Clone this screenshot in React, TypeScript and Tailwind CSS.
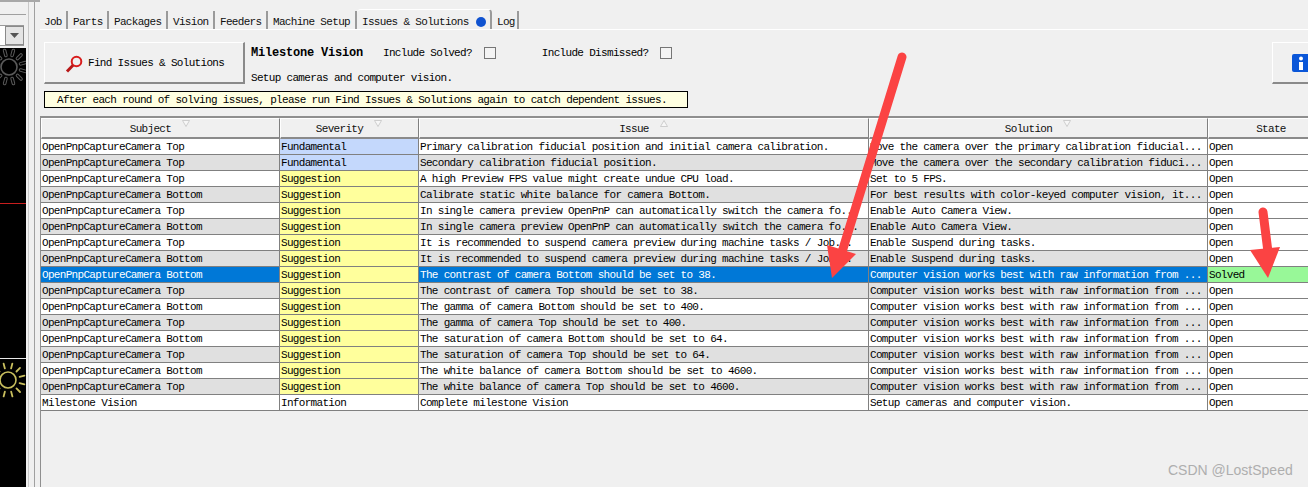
import React from "react";

const mono = "[font-family:'Liberation_Mono',monospace]";
const computer = "Computer vision works best with raw information from ...";
type R = [string, string, string, string];
const rows: R[] = [
  ["OpenPnpCaptureCamera Top", "Fundamental", "Primary calibration fiducial position and initial camera calibration.", "Move the camera over the primary calibration fiducial..."],
  ["OpenPnpCaptureCamera Top", "Fundamental", "Secondary calibration fiducial position.", "Move the camera over the secondary calibration fiduci..."],
  ["OpenPnpCaptureCamera Top", "Suggestion", "A high Preview FPS value might create undue CPU load.", "Set to 5 FPS."],
  ["OpenPnpCaptureCamera Bottom", "Suggestion", "Calibrate static white balance for camera Bottom.", "For best results with color-keyed computer vision, it..."],
  ["OpenPnpCaptureCamera Top", "Suggestion", "In single camera preview OpenPnP can automatically switch the camera fo...", "Enable Auto Camera View."],
  ["OpenPnpCaptureCamera Bottom", "Suggestion", "In single camera preview OpenPnP can automatically switch the camera fo...", "Enable Auto Camera View."],
  ["OpenPnpCaptureCamera Top", "Suggestion", "It is recommended to suspend camera preview during machine tasks / Job...", "Enable Suspend during tasks."],
  ["OpenPnpCaptureCamera Bottom", "Suggestion", "It is recommended to suspend camera preview during machine tasks / Job...", "Enable Suspend during tasks."],
  ["OpenPnpCaptureCamera Bottom", "Suggestion", "The contrast of camera Bottom should be set to 38.", computer],
  ["OpenPnpCaptureCamera Top", "Suggestion", "The contrast of camera Top should be set to 38.", computer],
  ["OpenPnpCaptureCamera Bottom", "Suggestion", "The gamma of camera Bottom should be set to 400.", computer],
  ["OpenPnpCaptureCamera Top", "Suggestion", "The gamma of camera Top should be set to 400.", computer],
  ["OpenPnpCaptureCamera Bottom", "Suggestion", "The saturation of camera Bottom should be set to 64.", computer],
  ["OpenPnpCaptureCamera Top", "Suggestion", "The saturation of camera Top should be set to 64.", computer],
  ["OpenPnpCaptureCamera Bottom", "Suggestion", "The white balance of camera Bottom should be set to 4600.", computer],
  ["OpenPnpCaptureCamera Top", "Suggestion", "The white balance of camera Top should be set to 4600.", computer],
  ["Milestone Vision", "Information", "Complete milestone Vision", "Setup cameras and computer vision."],
];

const tabs: [string, string, string][] = [
  ["Job", "w-[28px]", "pl-[4px]"],
  ["Parts", "w-[41px]", "pl-[5px]"],
  ["Packages", "w-[59px]", "pl-[5px]"],
  ["Vision", "w-[47px]", "pl-[5px]"],
  ["Feeders", "w-[53px]", "pl-[5px]"],
  ["Machine Setup", "w-[89px]", "pl-[5px]"],
];

const gridCols = "grid grid-cols-[239px_139px_450px_339px_126px]";

function Sun({ color, cx, cy, petals }: { color: string; cx: number; cy: number; petals?: boolean }) {
  const rays = Array.from({ length: 12 }, (_, i) => (i * Math.PI) / 6 + 0.26);
  return (
    <svg width="26" height="44" viewBox="0 0 26 44" className="block">
      <circle cx={cx} cy={cy} r="8" fill="none" stroke={color} strokeWidth="1.6" />
      {rays.map((a, i) => {
        const p = [cx + Math.cos(a) * 12, cy + Math.sin(a) * 12, cx + Math.cos(a) * 17, cy + Math.sin(a) * 17];
        return (
          <g key={i}>
            <line x1={p[0]} y1={p[1]} x2={p[2]} y2={p[3]} stroke={color} strokeWidth={petals ? 3.6 : 1.8} strokeLinecap="round" />
            {petals && <line x1={p[0]} y1={p[1]} x2={p[2]} y2={p[3]} stroke="#000" strokeWidth="1.6" strokeLinecap="round" />}
          </g>
        );
      })}
    </svg>
  );
}

function Head({ label, sort, up }: { label: string; sort?: boolean; up?: boolean }) {
  return (
    <div className={`h-[21px] border-t border-l border-t-white border-l-white border-r border-b-2 border-r-[#7f7f7f] border-b-[#8a8a8a] bg-[#f0f0f0] text-center leading-[20px] text-[#111] ${sort ? "pr-[20px]" : ""}`}>
      <span className="relative inline-block">
        {label}
        {sort && (
          <svg width="8" height="7" viewBox="0 0 8 7" className="absolute left-full top-[1px] ml-[11px]">
            <path d={up ? "M4 .5 L7.5 6.5 H.5 Z" : "M.5 .5 H7.5 L4 6.5 Z"} fill="#f7f7f7" stroke="#c4c4c4" strokeWidth="0.8" />
          </svg>
        )}
      </span>
    </div>
  );
}

function Check() {
  return <span className="inline-block h-[12px] w-[12px] border border-[#767676] bg-[#f4f4f4] align-middle" />;
}

export default function App() {
  return (
    <div className={`relative flex h-[487px] w-[1308px] overflow-hidden bg-[#f0f0f0] text-[11px] tracking-[-0.68px] text-black ${mono}`}>
      {/* left stub panel */}
      <div className="flex w-[40px] shrink-0 flex-col border-t-2 border-t-[#a8a8a8]">
        <div className="flex flex-1">
          <div className="flex w-[26px] flex-col pt-[12px]">
            <div className="h-[1px] bg-[#a0a0a0]" />
            <div className="mr-[2px] mt-[10px] flex h-[21px] border-y border-[#9a9a9a] bg-white">
              <div className="flex-1" />
              <div className="flex w-[19px] items-center justify-center border border-[#8a8a8a] bg-[#e4e4e4]">
                <svg width="9" height="5" viewBox="0 0 9 5"><path d="M0 0H9L4.5 5Z" fill="#555" /></svg>
              </div>
            </div>
            <div className="mt-[2px] flex flex-1 flex-col bg-black">
              <div className="overflow-hidden">
                <Sun color="#5a5a5a" cx={9} cy={19} petals />
              </div>
              <div className="mt-[111px] h-[1px] bg-[#c81e1e]" />
              <div className="h-[154px]" />
              <div className="h-[1px] bg-[#e8e8e8]" />
              <Sun color="#c9bf5e" cx={8} cy={21} />
            </div>
          </div>
          <div className="ml-[2px] w-[1px] bg-[#c8c8c8]" />
          <div className="ml-[5px] w-[1px] bg-[#a0a0a0]" />
        </div>
      </div>

      {/* main */}
      <div className="flex min-w-0 flex-1 flex-col pt-[9px]">
        <div className="flex h-[21px] items-end border-b border-b-white">
          {tabs.map(([t, w, p]) => (
            <div key={t} className={`h-[18px] ${w} ${p} shrink-0 border-r-2 border-r-[#9a9a9a] leading-[23px] text-[#111]`}>
              {t}
            </div>
          ))}
          <div className="flex h-[20px] w-[135px] shrink-0 items-center rounded-t-sm border-r-2 border-r-[#9a9a9a] border-t border-t-white pl-[5px] pt-[5px] text-[#111]">
            <span>Issues &amp; Solutions</span>
            <span className="ml-[7px] h-[10px] w-[10px] rounded-full bg-[#0f52d0]" />
          </div>
          <div className="h-[18px] w-[27px] shrink-0 border-r-2 border-r-[#9a9a9a] pl-[5px] leading-[23px] text-[#111]">Log</div>
        </div>

        <div className="mt-[12px] flex h-[42px] pl-[4px]">
          <button className="flex h-[42px] w-[201px] shrink-0 items-center border-t border-l border-t-white border-l-white border-r-2 border-b-2 border-r-[#8a8a8a] border-b-[#8a8a8a] bg-[#f0f0f0] pl-[20px] pt-[2px]">
            <svg width="18" height="18" viewBox="0 0 18 18">
              <circle cx="11.5" cy="6.5" r="4.8" fill="none" stroke="#d81c1c" strokeWidth="2" />
              <line x1="8" y1="10.3" x2="2" y2="16.5" stroke="#b81818" strokeWidth="3" />
            </svg>
            <span className="ml-[5px]">Find Issues &amp; Solutions</span>
          </button>
          <div className="ml-[6px] flex w-[440px] shrink-0 flex-col">
            <div className="mt-[4px] flex h-[14px] items-center">
              <span className="w-[132px] text-[12px] font-bold tracking-[-0.2px]">Milestone Vision</span>
              <span>Include Solved?</span>
              <span className="ml-[12px]"><Check /></span>
              <span className="ml-[46px]">Include Dismissed?</span>
              <span className="ml-[12px]"><Check /></span>
            </div>
            <div className="mt-[11px] leading-[14px]">Setup cameras and computer vision.</div>
          </div>
          <div className="ml-auto mr-[-24px] flex h-[42px] w-[60px] items-center border-t border-l border-t-white border-l-white border-b-2 border-b-[#8a8a8a] pl-[19px]">
            <svg width="18" height="18" viewBox="0 0 18 18">
              <rect width="18" height="18" rx="2" fill="#0a56d8" />
              <circle cx="9" cy="4.5" r="2" fill="#fff" />
              <rect x="7" y="8" width="4" height="8" fill="#fff" />
            </svg>
          </div>
        </div>

        <div className="ml-[4px] mt-[7px] h-[17px] w-[644px] border border-black bg-[#ffffe1] pl-[12px] leading-[16px]">
          After each round of solving issues, please run Find Issues &amp; Solutions again to catch dependent issues.
        </div>

        <div className="mt-[8px] flex-1 overflow-hidden border-t-2 border-l border-t-[#8f8f8f] border-l-[#8f8f8f]">
          <div className={`${gridCols} h-[21px]`}>
            <Head label="Subject" sort />
            <Head label="Severity" sort />
            <Head label="Issue" sort up />
            <Head label="Solution" sort />
            <Head label="State" />
          </div>
          {rows.map((r, i) => {
            const selected = i === 8;
            const base = selected ? "bg-[#0078d7] text-white" : i % 2 === 1 ? "bg-[#e0e0e0]" : "bg-white";
            const sev =
              r[1] === "Fundamental" ? "bg-[#c4d8fc]" : r[1] === "Suggestion" ? "bg-[#ffff9c]" : "bg-white";
            const cell = "h-[16px] overflow-hidden whitespace-nowrap border-r border-b border-[#808080] pl-[1px] leading-[17px]";
            return (
              <div key={i} className={`${gridCols} h-[16px]`}>
                <div className={`${cell} ${base}`}>{r[0]}</div>
                <div className={`${cell} ${sev}`}>{r[1]}</div>
                <div className={`${cell} ${base}`}>{r[2]}</div>
                <div className={`${cell} ${base}`}>{r[3]}</div>
                <div className={`${cell} ${selected ? "bg-[#98f898]" : "bg-white"}`}>{selected ? "Solved" : "Open"}</div>
              </div>
            );
          })}
        </div>
      </div>

      {/* red annotation arrows lying over the table */}
      <svg className="pointer-events-none absolute left-0 top-0" width="1308" height="487" viewBox="0 0 1308 487">
        <path d="M902 57 L842 252" stroke="#fb4343" strokeWidth="9" strokeLinecap="round" fill="none" />
        <path d="M827 245 L856 254 L832 278 Z" fill="#fb4343" />
        <path d="M1263 212 L1268 252" stroke="#fb4343" strokeWidth="9" strokeLinecap="round" fill="none" />
        <path d="M1250 250 L1280 247 L1268 278 Z" fill="#fb4343" />
      </svg>

      <div className="absolute left-[1168px] top-[460px] text-[14px] tracking-normal text-[#aeaeae] [font-family:'Liberation_Sans',sans-serif]">
        CSDN @LostSpeed
      </div>
    </div>
  );
}
